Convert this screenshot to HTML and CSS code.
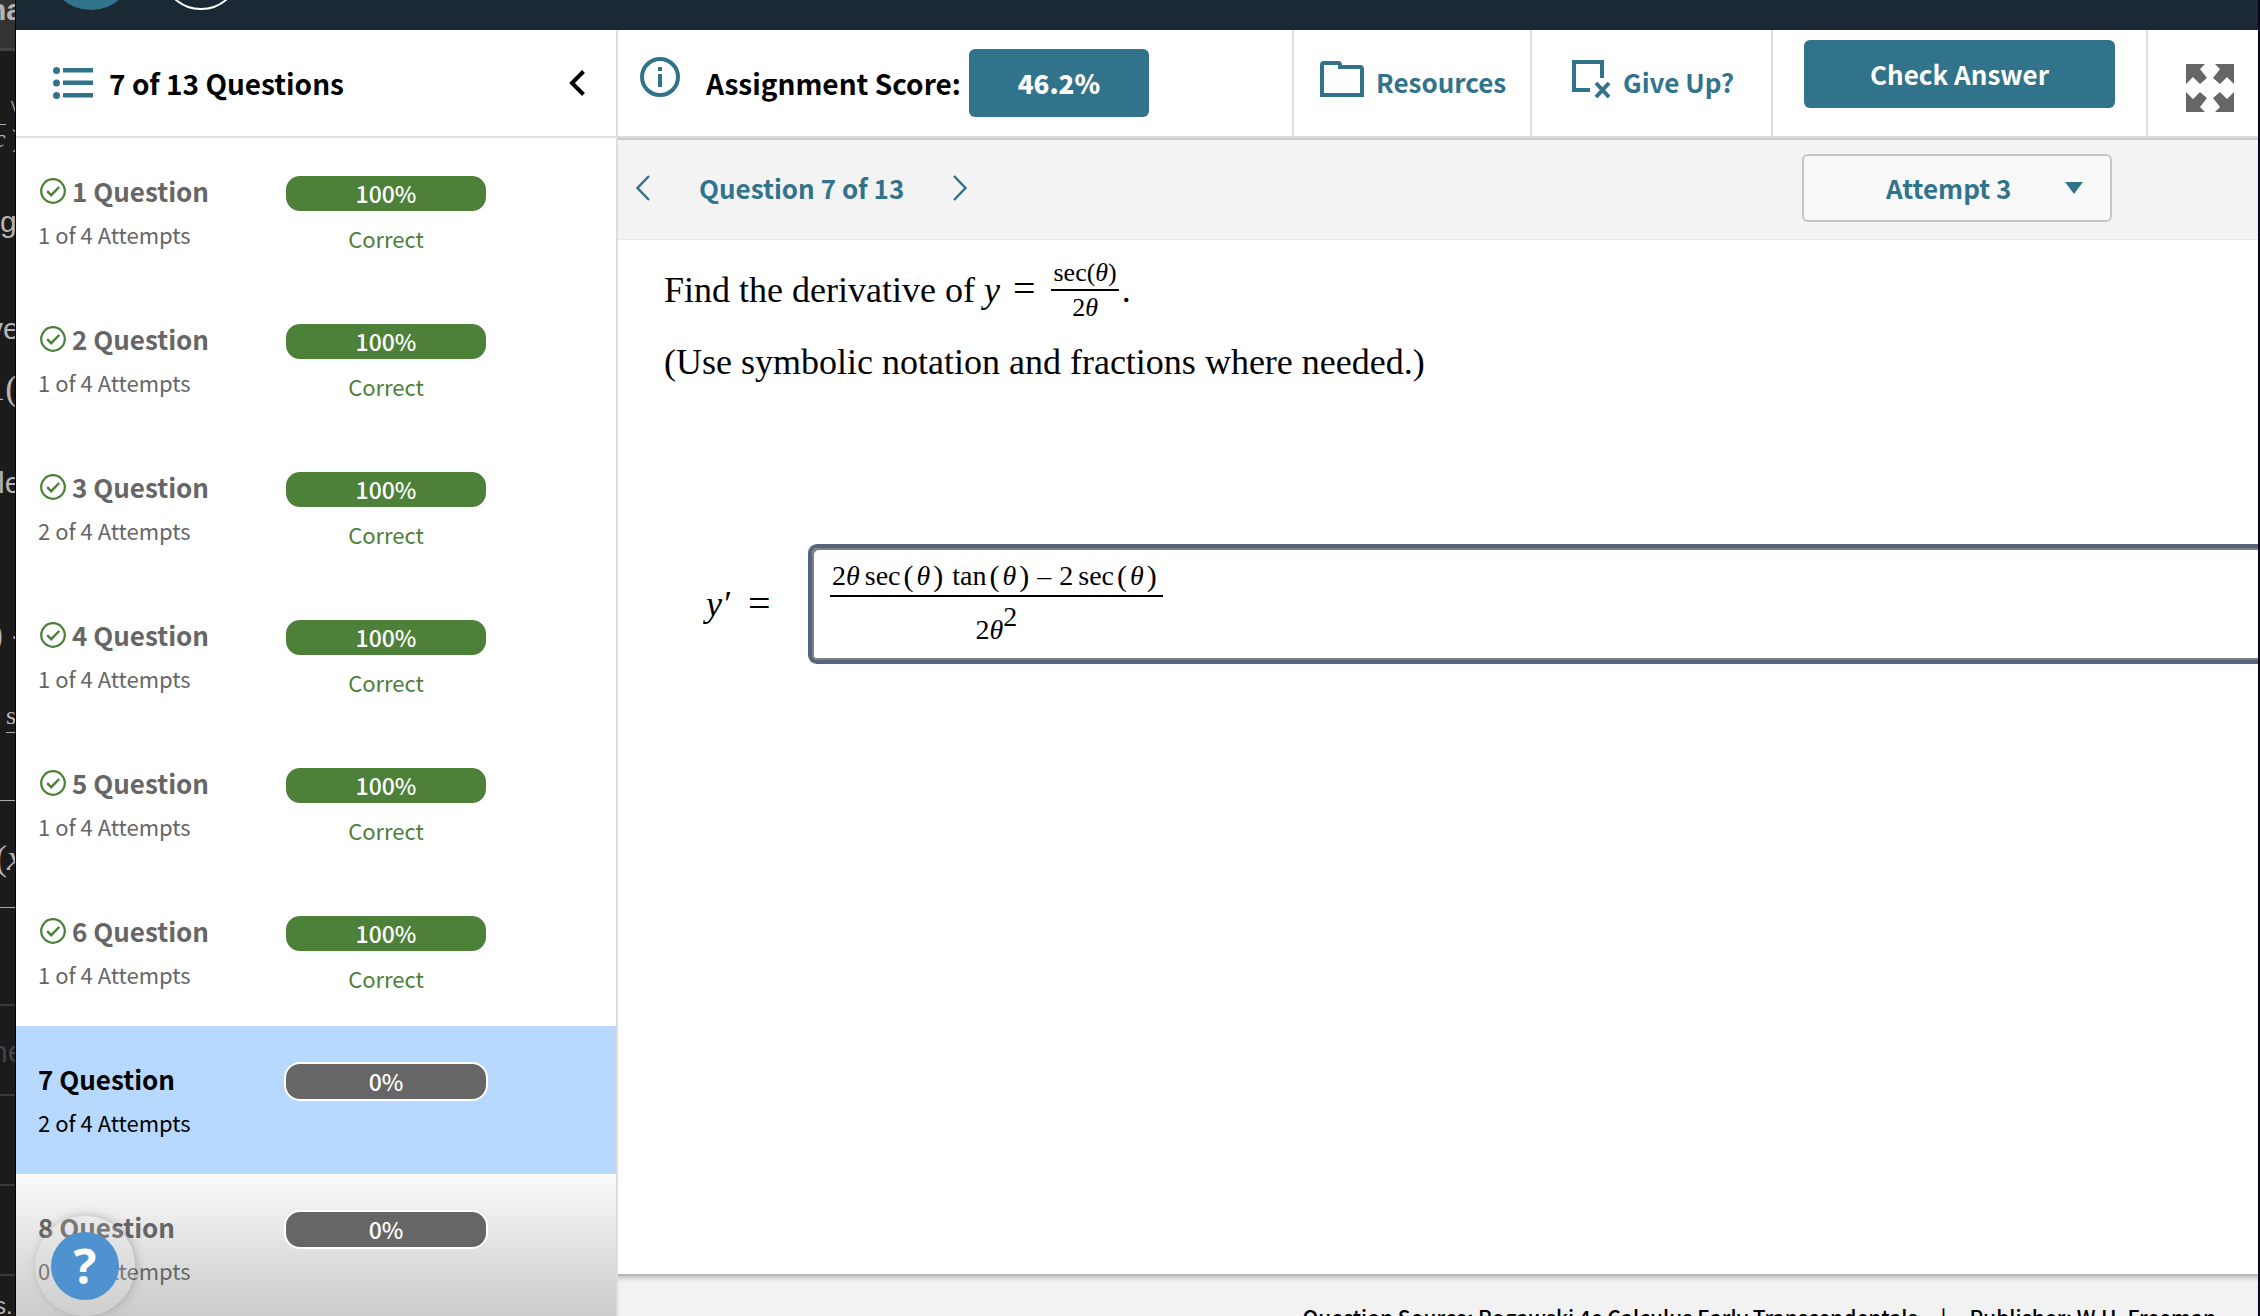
FILE: index.html
```html
<!DOCTYPE html>
<html lang="en">
<head>
<meta charset="utf-8">
<title>Question 7 of 13</title>
<link rel="stylesheet" href="styles.css">
</head>
<body>
<svg class="defs" aria-hidden="true">
  <symbol id="check" viewBox="0 0 26 26"><circle cx="13" cy="13" r="11.8" fill="none" stroke="currentColor" stroke-width="2.2"/><path d="M7.2 13.2l4 4 8-8.2" fill="none" stroke="currentColor" stroke-width="2.4"/></symbol>
</svg>
<div class="desktop">
  <div class="behind" aria-hidden="true">
    <i class="bar"></i>
    <span class="frag sans bold" style="top:-14px;left:-12px">na</span>
    <span class="frag math" style="top:90px;left:11px">\</span>
    <i class="rule short" style="top:124px"></i>
    <span class="frag math" style="top:119px;left:-6px"><i>c</i> )</span>
    <span class="frag sans" style="top:198px;left:0">g</span>
    <span class="frag sans" style="top:305px;left:-12px">ve</span>
    <span class="frag paren" style="top:366px;left:-33px">−1(</span>
    <span class="frag sans" style="top:459px;left:-2px">le</span>
    <span class="frag paren" style="top:612px;left:-9px">) -</span>
    <span class="frag math" style="top:696px;left:6px">s</span>
    <i class="rule end" style="top:732px"></i>
    <i class="rule" style="top:800px"></i>
    <span class="frag paren" style="top:836px;left:-5px">(<i>x</i></span>
    <i class="rule" style="top:907px"></i>
    <i class="rule dim" style="top:1004px"></i>
    <span class="frag sans dim" style="top:1028px;left:-9px">ne</span>
    <i class="rule dim" style="top:1094px"></i>
    <i class="rule dim" style="top:1184px"></i>
    <i class="rule dim" style="top:1274px"></i>
    <span class="frag small" style="top:1286px;left:-6px">s.</span>
  </div>
  <div class="app">
    <header class="site"><span class="disc"></span><span class="ring"></span></header>
    <div class="columns">
      <aside class="side">
        <div class="side-head">
          <svg width="40" height="32" viewBox="0 0 40 32" fill="#31738b"><circle cx="3.5" cy="3.5" r="3.5"/><circle cx="3.5" cy="16" r="3.5"/><circle cx="3.5" cy="28.5" r="3.5"/><path d="M10 1h30v4.500H10zM10 13.500h30v4.500H10zM10 26h30v4.500H10z"/></svg>
          <h2>7 of 13 Questions</h2>
          <button class="icon-btn" aria-label="Collapse question list"><svg width="16" height="26" viewBox="0 0 16 26"><path d="M14.500 1.500L3 13l11.500 11.500" fill="none" stroke="#000" stroke-width="4"/></svg></button>
        </div>
        <ol class="list">
          <li class="row"><div><a href="#q1"><svg class="ok"><use href="#check"/></svg>1 Question</a><p>1 of 4 Attempts</p></div><div class="grade"><b class="pill">100%</b><span>Correct</span></div></li>
          <li class="row"><div><a href="#q2"><svg class="ok"><use href="#check"/></svg>2 Question</a><p>1 of 4 Attempts</p></div><div class="grade"><b class="pill">100%</b><span>Correct</span></div></li>
          <li class="row"><div><a href="#q3"><svg class="ok"><use href="#check"/></svg>3 Question</a><p>2 of 4 Attempts</p></div><div class="grade"><b class="pill">100%</b><span>Correct</span></div></li>
          <li class="row"><div><a href="#q4"><svg class="ok"><use href="#check"/></svg>4 Question</a><p>1 of 4 Attempts</p></div><div class="grade"><b class="pill">100%</b><span>Correct</span></div></li>
          <li class="row"><div><a href="#q5"><svg class="ok"><use href="#check"/></svg>5 Question</a><p>1 of 4 Attempts</p></div><div class="grade"><b class="pill">100%</b><span>Correct</span></div></li>
          <li class="row"><div><a href="#q6"><svg class="ok"><use href="#check"/></svg>6 Question</a><p>1 of 4 Attempts</p></div><div class="grade"><b class="pill">100%</b><span>Correct</span></div></li>
          <li class="row current"><div><a href="#q7">7 Question</a><p>2 of 4 Attempts</p></div><div class="grade"><b class="pill zero">0%</b></div></li>
          <li class="row fading"><div><a href="#q8">8 Question</a><p>0 of 4 Attempts</p></div><div class="grade"><b class="pill zero">0%</b></div></li>
        </ol>
        <button class="help" aria-label="Help"><span>?</span></button>
      </aside>
      <main class="main">
        <div class="tools">
          <div class="score">
            <svg width="40" height="40" viewBox="0 0 40 40"><circle cx="20" cy="20" r="18" fill="none" stroke="#31738b" stroke-width="4"/><path d="M18 10h4v4h-4zM18 17h4v13h-4z" fill="#31738b"/></svg>
            <span>Assignment Score:</span><b>46.2%</b>
          </div>
          <button class="tool resources"><svg width="44" height="36" viewBox="0 0 44 36"><path d="M2 33V4q0-2 2-2h14q2 0 2 2v2h20q2 0 2 2v25" fill="none" stroke="#31738b" stroke-width="4"/><path d="M0 32h44v4H0z" fill="#31738b"/></svg>Resources</button>
          <button class="tool give"><svg width="39" height="38" viewBox="0 0 39 38"><path d="M18 30H2V2h28v16" fill="none" stroke="#31738b" stroke-width="4"/><path d="M24 23l13 14M37 23L24 37" fill="none" stroke="#31738b" stroke-width="4"/></svg>Give Up?</button>
          <div class="submit"><button class="primary">Check Answer</button></div>
          <button class="tool expand" aria-label="Full screen"><svg width="48" height="48" viewBox="0 0 48 48" fill="#666"><path d="M0 0h19l-5 5 7 9-7 6-7-7-7 7z"/><path d="M48 0H29l5 5-7 9 7 6 7-7 7 7zM0 48h19l-5-5 7-9-7-6-7 7-7-7zM48 48H29l5-5-7-9 7-6 7 7 7-7z"/></svg></button>
        </div>
        <nav class="pager">
          <button class="icon-btn" aria-label="Previous question"><svg width="16" height="26" viewBox="0 0 16 26"><path d="M14 1L2.500 13 14 25" fill="none" stroke="#31738b" stroke-width="2.500"/></svg></button>
          <span>Question 7 of 13</span>
          <button class="icon-btn" aria-label="Next question"><svg width="16" height="26" viewBox="0 0 16 26"><path d="M2 1l11.500 12L2 25" fill="none" stroke="#31738b" stroke-width="2.500"/></svg></button>
          <div class="attempt"><select aria-label="Attempt"><option>Attempt 3</option></select><svg width="18" height="12" viewBox="0 0 18 12"><path d="M0 0h18L9 12z" fill="#31738b"/></svg></div>
        </nav>
        <section class="question">
          <div class="prompt">
            <p>Find the derivative of <i>y</i><span class="eq">=</span><span class="frac"><span>sec(<i>θ</i>)</span><span>2<i>θ</i></span></span>.</p>
            <p>(Use symbolic notation and fractions where needed.)</p>
          </div>
          <div class="answer">
            <span class="label" id="lhs"><i>y</i><i>′</i></span><span class="equals">=</span>
            <div class="field" role="textbox" aria-labelledby="lhs" tabindex="0">
              <div class="big"><div class="num"><span>2<i>θ</i></span><span>sec</span><span class="par">(</span><i>θ</i><span class="par">)</span><span class="fn">tan</span><span class="par">(</span><i>θ</i><span class="par">)</span><span class="op">–</span><span>2</span><span class="fn2">sec</span><span class="par">(</span><i>θ</i><span class="par">)</span></div><div class="den">2<i>θ</i><sup>2</sup></div></div>
            </div>
          </div>
        </section>
        <footer class="source"><span>Question Source: Rogawski 4e Calculus Early Transcendentals</span><span>|</span><span>Publisher: W.H. Freeman</span></footer>
      </main>
    </div>
  </div>
  <div class="edge"></div>
</div>
</body>
</html>
```
FILE: styles.css
```css
* { box-sizing: border-box; }
body { margin: 0; font-family: "Noto Sans CJK SC", "Noto Sans", sans-serif; font-size: 28px; line-height: 36px; color: #000; background: #fff; }
h2, p, ol { margin: 0; padding: 0; }
button, select { font: inherit; border: 0; margin: 0; background: none; }
svg { display: block; flex: none; }
.defs { position: absolute; width: 0; height: 0; }
.desktop { display: flex; height: 100vh; overflow: hidden; }

.behind { position: relative; flex: none; width: 16px; background: #1b1b1b; overflow: hidden; border-right: 1px solid #000; }
.bar { display: block; height: 51px; background: #333; border-bottom: 3px solid #444; }
.frag { position: absolute; white-space: nowrap; color: #b5b5b5; line-height: 48px; }
.sans { font-family: "Liberation Sans", Arial, sans-serif; font-size: 30px; }
.bold { font-weight: 700; }
.small { font-family: "Liberation Sans", Arial, sans-serif; font-size: 24px; line-height: 40px; }
.math { font-family: "Liberation Serif", "Times New Roman", serif; font-size: 26px; line-height: 40px; }
.paren { font-family: "Liberation Serif", "Times New Roman", serif; font-size: 36px; line-height: 44px; }
.rule { position: absolute; left: 0; width: 16px; height: 1px; background: #aaa; }
.short { width: 6px; }
.end { left: 6px; }
.sans.dim { color: #444; }
.rule.dim { height: 2px; background: #3a3a3a; }
.edge { flex: none; width: 2px; background: #09061c; }

.app { flex: 1; min-width: 0; display: flex; flex-direction: column; }
.site { position: relative; flex: none; height: 30px; background: #1a2933; overflow: hidden; }
.disc, .ring { position: absolute; border-radius: 50%; }
.disc { width: 88px; height: 88px; left: 31px; bottom: 20px; background: #31738b; }
.ring { width: 80px; height: 80px; left: 145px; bottom: 20px; border: 2px solid #fff; }
.columns { flex: 1; min-height: 0; display: flex; }

.side { position: relative; flex: none; width: 602px; border-right: 2px solid #ddd; overflow: hidden; }
.side-head { display: flex; align-items: center; height: 108px; padding: 0 31px 0 37px; border-bottom: 2px solid #ddd; }
.side-head h2 { flex: 1; margin-left: 16px; font-size: 28px; font-weight: 700; }
.icon-btn { padding: 0; }
.list { list-style: none; }
.row { display: flex; height: 148px; padding: 36px 0 0 22px; color: #666; }
.row > div:first-child { width: 246px; }
.row a { display: flex; align-items: center; gap: 6px; color: inherit; text-decoration: none; font-weight: 700; font-size: 26px; line-height: 34px; }
.row p { margin-top: 8px; font-size: 22px; }
.ok { width: 26px; height: 26px; margin-left: 2px; color: #4b8038; }
.grade { width: 204px; text-align: center; color: #4b8038; font-size: 22px; }
.grade span { display: block; margin-top: 7px; }
.pill { display: block; height: 39px; border: 2px solid #fff; border-radius: 16px; background: #4d8039; color: #fff; font-weight: 500; font-size: 23px; line-height: 35px; }
.pill.zero { background: #666; }
.current { background: #b7d8ff; color: #000; }
.fading { background: linear-gradient(#fafafa, #c9c9c9); }
.help { position: absolute; left: 19px; bottom: 0; width: 100px; height: 100px; padding: 16px; border-radius: 50%; background: rgba(225, 225, 225, .15); box-shadow: 2px -1px 10px rgba(0, 0, 0, .2); }
.help span { display: block; width: 68px; height: 68px; border-radius: 50%; background: #4f92d0; color: #fff; font: 700 48px/68px "Open Sans", sans-serif; text-align: center; }

.main { flex: 1; min-width: 0; display: flex; flex-direction: column; }
.tools { flex: none; display: flex; height: 108px; border-bottom: 2px solid #ddd; font-weight: 700; }
.score { flex: 1; display: flex; align-items: center; padding-left: 22px; white-space: nowrap; }
.score svg { margin: 0 26px 12px 0; }
.score b { width: 180px; margin-left: 8px; border-radius: 6px; background: #31738b; color: #fff; text-align: center; font-size: 26px; line-height: 68px; }
.tool { flex: none; display: flex; align-items: center; gap: 12px; border-left: 2px solid #ddd; color: #31738b; font-weight: 700; font-size: 26px; padding: 0 0 2px; white-space: nowrap; }
.tool svg { margin-bottom: 6px; }
.resources { width: 238px; padding-left: 26px; }
.give { width: 241px; padding-left: 40px; }
.submit { flex: none; width: 375px; padding: 10px 31px; border-left: 2px solid #ddd; }
.primary { width: 100%; height: 68px; border-radius: 6px; background: #31738b; color: #fff; font-weight: 700; font-size: 26px; padding: 0; }
.expand { width: 112px; padding-left: 38px; }
.expand svg { margin: 12px 0 0; }

.pager { flex: none; display: flex; align-items: center; height: 102px; padding: 0 146px 3px 17px; background: #f3f3f3; border-top: 2px solid #ccc; border-bottom: 1px solid #e8e8e8; color: #31738b; font-weight: 700; font-size: 26px; }
.pager > span { margin: 0 48px; }
.attempt { position: relative; margin-left: auto; width: 310px; }
.attempt select { display: block; width: 100%; height: 68px; padding: 0 0 0 82px; appearance: none; border: 2px solid #c4c4c4; border-radius: 6px; background: #f9f9f9; color: #31738b; font-weight: 700; }
.attempt svg { position: absolute; right: 29px; top: 28px; pointer-events: none; }

.question { flex: 1; min-height: 0; overflow: hidden; font-family: "Liberation Serif", "Times New Roman", serif; font-size: 36px; }
.prompt { padding: 14px 46px 0; }
.prompt p { line-height: 72px; }
.eq { margin: 0 16px 0 13px; font-size: 40px; line-height: 36px; }
.frac { display: inline-flex; flex-direction: column; margin-top: -8px; margin-right: 3px; font-size: 26px; line-height: 33px; text-align: center; vertical-align: middle; }
.frac span:first-child { border-bottom: 2px solid #000; padding: 0 2px; }
.answer { display: flex; align-items: center; margin-top: 146px; padding-left: 88px; }
.label { width: 42px; }
.equals { width: 60px; font-size: 40px; }
.field { flex: 1; height: 120px; padding: 10px 18px; border: 4px solid #55637b; border-right: 0; border-radius: 9px 0 0 9px; box-shadow: inset 2px 2px #808080, inset 0 -2px #808080; font-size: 28px; }
.big { display: inline-flex; flex-direction: column; align-items: center; }
.num { display: flex; gap: 3px; height: 36px; line-height: 30px; border-bottom: 2px solid #000; padding: 0 6px 0 2px; }
.num > span:first-child { margin-right: 2px; }
.par { font-size: 30px; }
.fn { margin-left: 6px; }
.fn2 { margin-left: 2px; }
.op { margin: 0 5px; }
.den { margin-top: 17px; line-height: 32px; }
.den sup { font-size: 28px; line-height: 0; vertical-align: 13px; }

.source { flex: none; display: flex; gap: 23px; justify-content: flex-end; height: 42px; padding: 23px 42px 0 0; overflow: hidden; background: #f2f2f2; border-top: 2px solid #b5b9b5; box-shadow: inset 0 5px 5px -3px #bbb; font-size: 21px; font-weight: 500; white-space: nowrap; }
```
